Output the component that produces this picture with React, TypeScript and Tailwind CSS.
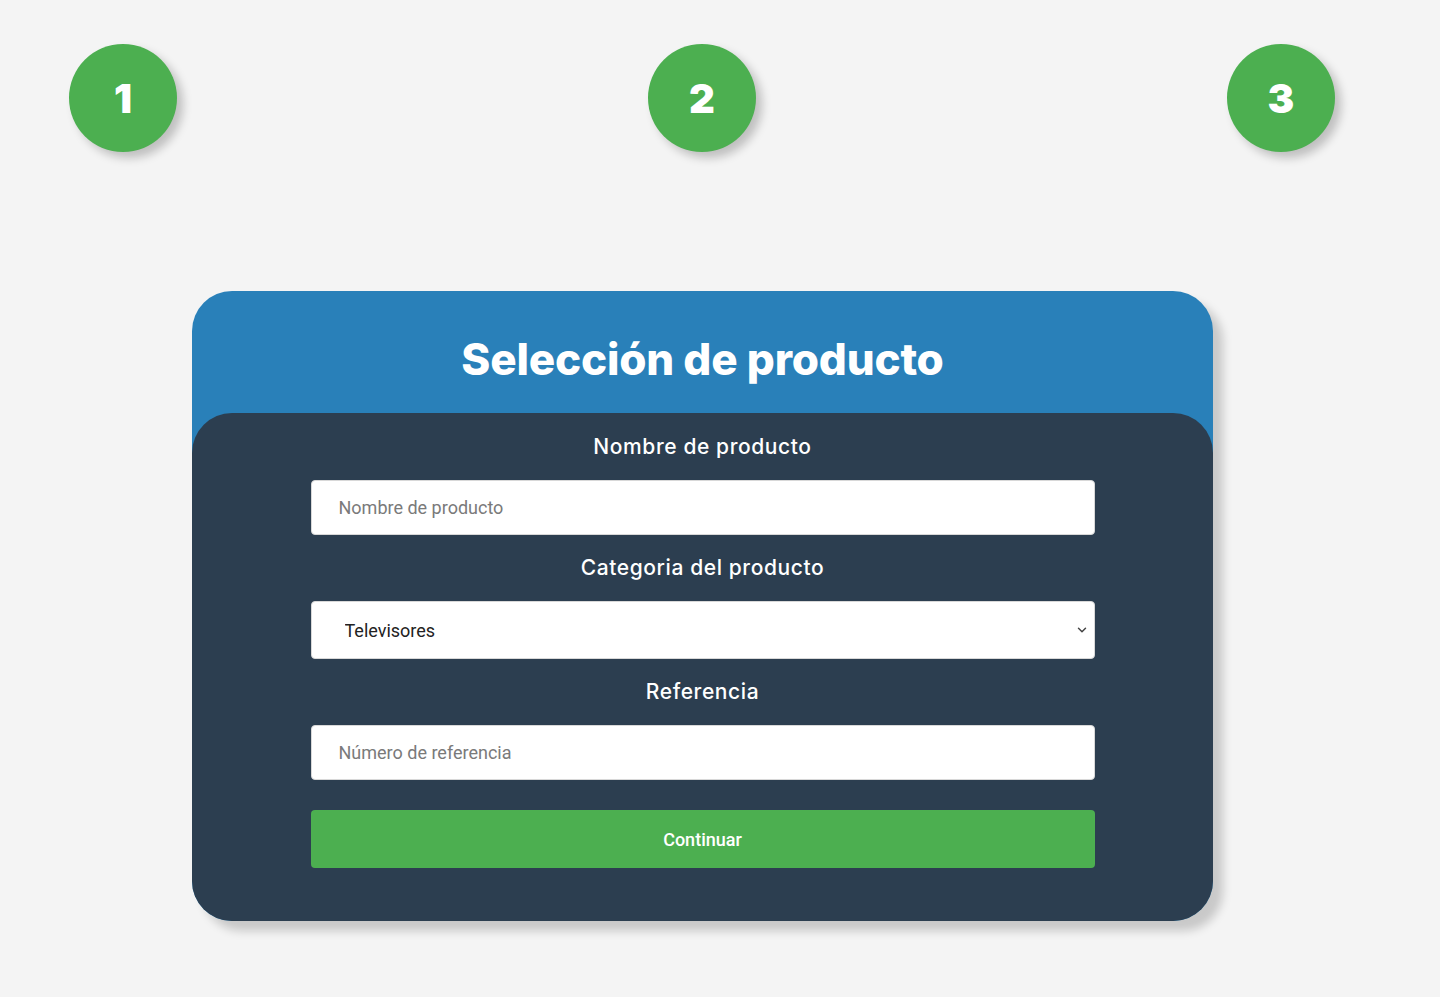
import { ChevronDown } from 'lucide-react'

const steps = ['1', '2', '3']

export default function App() {
  return (
    <div className="min-h-[997px] bg-[#f4f4f4] font-['Inter','Liberation_Sans',sans-serif]">
      {/* Steps */}
      <div className="flex justify-between pl-[69px] pr-[105px] pt-[44px]">
        {steps.map((n) => (
          <div
            key={n}
            className="w-[108px] h-[108px] rounded-full bg-[#4caf50] flex items-center justify-center pt-[2px] text-white text-[40px] font-black shadow-[6px_6px_10px_rgba(0,0,0,0.22)]"
          >
            {n}
          </div>
        ))}
      </div>

      {/* Card */}
      <div className="ml-[192px] mt-[139px] w-[1021px] rounded-[40px] bg-[#2980b9] shadow-[10px_10px_10px_rgba(0,0,0,0.18)] overflow-hidden">
        <div className="h-[122px] flex items-center justify-center pt-[14px]">
          <h1 className="text-white text-[44px] font-extrabold tracking-[-0.2px] leading-none">
            Selección de producto
          </h1>
        </div>

        <div className="bg-[#2c3e50] rounded-t-[40px] pt-[21px] pb-[53px] flex flex-col items-center">
          <label className="text-white text-[21px] font-medium tracking-[0.6px] leading-[26px]">Nombre de producto</label>
          <input
            className="mt-[20px] w-[784px] h-[55px] rounded-[4px] border border-[#d8d8d8] bg-white px-[27px] text-[18px] font-['Roboto',sans-serif] text-[#333] placeholder:text-[#7a7a7a] outline-none"
            placeholder="Nombre de producto"
          />

          <label className="mt-[20px] text-white text-[21px] font-medium tracking-[0.6px] leading-[26px]">Categoria del producto</label>
          <div className="relative mt-[20px] w-[784px] h-[58px]">
            <select
              className="appearance-none w-full h-full rounded-[4px] border border-[#d8d8d8] bg-white pl-[33px] text-[18px] font-['Roboto',sans-serif] text-[#222] outline-none"
              defaultValue="Televisores"
            >
              <option>Televisores</option>
              <option>Neveras</option>
              <option>Lavadoras</option>
            </select>
            <ChevronDown className="absolute right-[6px] top-1/2 -translate-y-1/2 w-[14px] h-[14px] text-[#444] pointer-events-none" strokeWidth={2.5} />
          </div>

          <label className="mt-[20px] text-white text-[21px] font-medium tracking-[0.6px] leading-[26px]">Referencia</label>
          <input
            className="mt-[20px] w-[784px] h-[55px] rounded-[4px] border border-[#d8d8d8] bg-white px-[27px] text-[18px] font-['Roboto',sans-serif] text-[#333] placeholder:text-[#7a7a7a] outline-none"
            placeholder="Número de referencia"
          />

          <button className="mt-[30px] w-[784px] h-[58px] rounded-[4px] bg-[#4caf50] text-white text-[18px] font-medium font-['Roboto',sans-serif]">
            Continuar
          </button>
        </div>
      </div>
    </div>
  )
}
